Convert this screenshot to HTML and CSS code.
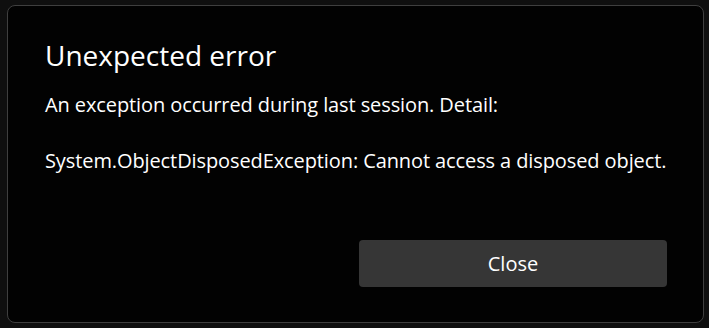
FILE: index.html
```html
<!DOCTYPE html>
<html>
<head>
<meta charset="utf-8">
<link rel="stylesheet" href="styles.css">
</head>
<body>
<div class="dialog">
  <div class="content">
    <h1 class="title">Unexpected error</h1>
    <p class="text">An exception occurred during last session. Detail:</p>
    <p class="text detail">System.ObjectDisposedException: Cannot access a disposed object.</p>
  </div>
  <div class="actions">
    <button class="btn">Close</button>
  </div>
</div>
</body>
</html>
```

FILE: styles.css
```css
html, body {
  margin: 0;
  height: 100%;
}
body {
  background: #0f0f0f;
  box-sizing: border-box;
  padding: 5px 5px 5px 7px;
  font-family: "Open Sans", "Noto Sans", sans-serif;
  color: #ffffff;
}
.dialog {
  box-sizing: border-box;
  height: 318px;
  border: 1px solid #3f3f3f;
  border-radius: 8px;
  background: #020202;
  display: flex;
  flex-direction: column;
  padding: 31px 36px 35px 37px;
}
.title {
  margin: 0;
  font-size: 28px;
  line-height: 36px;
  font-weight: 400;
  letter-spacing: 0;
}
.text {
  margin: 18px 0 0 0;
  font-size: 20px;
  line-height: 28px;
  letter-spacing: -0.1px;
}
.detail {
  margin-top: 28px;
}
.actions {
  margin-top: auto;
  display: flex;
  justify-content: flex-end;
}
.btn {
  width: 308px;
  height: 47px;
  border: none;
  border-radius: 4px;
  background: #363636;
  color: #ffffff;
  font-family: "Open Sans", "Noto Sans", sans-serif;
  font-size: 20px;
  line-height: 47px;
  padding: 0;
}
```
